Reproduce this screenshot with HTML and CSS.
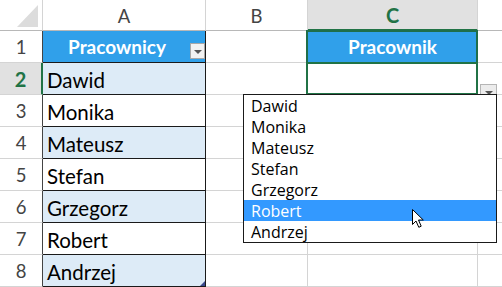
FILE: index.html
```html
<!DOCTYPE html>
<html lang="pl">
<head>
<meta charset="utf-8">
<title>Arkusz</title>
<link rel="stylesheet" href="styles.css">
</head>
<body>
<div class="sheet">
  <div class="corner hdr"><span class="tri"></span></div>
  <div class="hdr col">A</div>
  <div class="hdr col">B</div>
  <div class="hdr col active-col">C</div>
  <div class="hdr col last"></div>

  <div class="hdr row tb">1</div>
  <div class="cell tbl th">Pracownicy<span class="filter"><span class="arrow"></span></span></div>
  <div class="cell"></div>
  <div class="cell th c1">Pracownik</div>
  <div class="cell last"></div>

  <div class="hdr row active-row">2</div>
  <div class="cell tbl band">Dawid</div>
  <div class="cell"></div>
  <div class="cell c2"><span class="dd"><span class="arrow"></span></span></div>
  <div class="cell last"></div>

  <div class="hdr row tb">3</div>
  <div class="cell tbl">Monika</div>
  <div class="cell"></div>
  <div class="cell"></div>
  <div class="cell last"></div>

  <div class="hdr row tb">4</div>
  <div class="cell tbl band">Mateusz</div>
  <div class="cell"></div>
  <div class="cell"></div>
  <div class="cell last"></div>

  <div class="hdr row tb">5</div>
  <div class="cell tbl">Stefan</div>
  <div class="cell"></div>
  <div class="cell"></div>
  <div class="cell last"></div>

  <div class="hdr row tb">6</div>
  <div class="cell tbl band">Grzegorz</div>
  <div class="cell"></div>
  <div class="cell"></div>
  <div class="cell last"></div>

  <div class="hdr row tb">7</div>
  <div class="cell tbl">Robert</div>
  <div class="cell"></div>
  <div class="cell"></div>
  <div class="cell last"></div>

  <div class="hdr row tb">8</div>
  <div class="cell tbl band endcell">Andrzej<span class="resize"></span></div>
  <div class="cell"></div>
  <div class="cell"></div>
  <div class="cell last"></div>

  <ul class="list">
    <li>Dawid</li>
    <li>Monika</li>
    <li>Mateusz</li>
    <li>Stefan</li>
    <li>Grzegorz</li>
    <li class="hl">Robert</li>
    <li>Andrzej</li>
  </ul>
  <svg class="cursor" width="14" height="21" viewBox="0 0 14 21">
    <path d="M1.5 1.5 L1.5 16.5 L5 13 L7.8 19.3 L10.2 18.2 L7.5 12 L12.3 12 Z" fill="#fff" stroke="#000" stroke-width="1" stroke-linejoin="miter"/>
  </svg>
</div>
</body>
</html>
```
FILE: styles.css
```css
html, body {
  margin: 0;
  padding: 0;
  background: #fff;
}
.sheet {
  position: relative;
  display: grid;
  grid-template-columns: 43px 163px 102px 170px 24px;
  grid-template-rows: 31px repeat(8, 32px);
  width: 502px;
  height: 287px;
  overflow: hidden;
  font-family: Lato, "Open Sans", sans-serif;
  font-size: 20.5px;
  color: #000;
}
.sheet > div {
  box-sizing: border-box;
  border-right: 1px solid #d4d4d4;
  border-bottom: 1px solid #d4d4d4;
  position: relative;
}
.sheet > .last {
  border-right: none;
}
.hdr {
  background: #fff;
  color: #444;
  font-size: 18.5px;
  display: flex;
  align-items: center;
  justify-content: center;
}
.hdr.col {
  border-bottom-color: #b8b8b8;
  padding-top: 1px;
}
.corner {
  border-bottom-color: #b8b8b8 !important;
}
.tri {
  position: absolute;
  right: 4px;
  bottom: 3px;
  width: 0;
  height: 0;
  border-left: 21px solid transparent;
  border-bottom: 22px solid #dcdcdc;
}
.hdr.row {
  padding-top: 1px;
}
.sheet > .tb {
  border-right-color: #444;
}
.active-col {
  background: #e1e1e1;
  color: #217346;
  font-weight: 700;
  font-size: 20px;
}
.sheet > .active-col {
  border-bottom: 2px solid #217346;
}
.active-row {
  background: #e1e1e1;
  color: #217346;
  font-weight: 700;
  font-size: 20px;
}
.sheet > .active-row {
  border-right: 2px solid #217346;
}
.cell {
  display: flex;
  align-items: center;
  padding: 2px 0 0 4px;
  white-space: nowrap;
}
.sheet > .tbl {
  border-right-color: #1a1a1a;
  border-bottom-color: #1a1a1a;
}
.band {
  background: #ddebf7;
}
.th {
  background: #30a0ea;
  color: #fff;
  font-weight: 700;
  font-size: 19px;
  justify-content: center;
  padding: 0;
}
.th.tbl {
  padding-right: 14px;
}
.filter {
  position: absolute;
  right: 0;
  top: 12px;
  width: 15px;
  height: 16px;
  box-sizing: border-box;
  background: #f2f2f2;
  border: 1px solid #a8a8a8;
  display: flex;
  align-items: center;
  justify-content: center;
}
.arrow {
  width: 0;
  height: 0;
  border-left: 4px solid transparent;
  border-right: 4px solid transparent;
  border-top: 4px solid #555;
  margin-top: 2px;
}
.c1::after {
  content: "";
  position: absolute;
  left: -2px;
  top: -1px;
  right: -1px;
  bottom: -1px;
  border: 2px solid #1f6e4a;
  border-bottom: none;
}
.c2::after {
  content: "";
  position: absolute;
  left: -2px;
  top: -1px;
  right: -1px;
  bottom: -1px;
  border: 2px solid #217346;
}
.dd {
  position: absolute;
  left: 172px;
  top: 21px;
  width: 17px;
  height: 16px;
  box-sizing: border-box;
  background: #ececec;
  border: 1px solid #b5b5b5;
  display: flex;
  align-items: center;
  justify-content: center;
  z-index: 2;
}
.resize {
  position: absolute;
  right: 0;
  bottom: 0;
  width: 0;
  height: 0;
  border-left: 5px solid transparent;
  border-bottom: 5px solid #3a4a8c;
}
.list {
  position: absolute;
  left: 243px;
  top: 94px;
  width: 254px;
  height: 149px;
  box-sizing: border-box;
  margin: 0;
  padding: 0;
  list-style: none;
  background: #fff;
  border: 1px solid #1a1a1a;
  font-family: "Open Sans", "Noto Sans", sans-serif;
  font-size: 16px;
  color: #000;
  z-index: 3;
}
.list li {
  height: 21px;
  line-height: 21px;
  padding-left: 7px;
  padding-top: 1px;
  box-sizing: border-box;
}
.list li.hl {
  background: #3399ff;
  color: #fff;
}
.cursor {
  position: absolute;
  left: 411px;
  top: 208px;
  z-index: 4;
}
```
